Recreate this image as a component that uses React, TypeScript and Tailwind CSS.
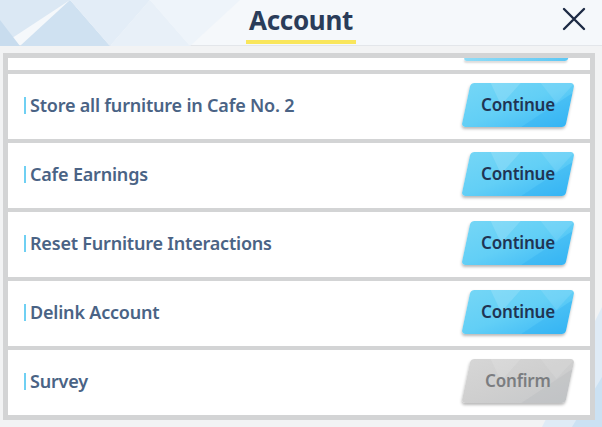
import React from "react";

type Row = { label: string; action: string; disabled?: boolean };

const rows: Row[] = [
  { label: "Store all furniture in Cafe No. 2", action: "Continue" },
  { label: "Cafe Earnings", action: "Continue" },
  { label: "Reset Furniture Interactions", action: "Continue" },
  { label: "Delink Account", action: "Continue" },
  { label: "Survey", action: "Confirm", disabled: true },
];

function ActionButton({ text, disabled }: { text: string; disabled?: boolean }) {
  return (
    <button
      className={
        "relative w-[104px] h-[44px] -skew-x-12 rounded-[4px] overflow-hidden flex items-center justify-center shadow-[0_2px_3px_rgba(0,0,0,0.28)] " +
        (disabled
          ? "bg-gradient-to-br from-[#d6d6d6] via-[#cfcfcf] to-[#c6c8ca]"
          : "bg-gradient-to-br from-[#74d6f6] via-[#62cff6] to-[#38b8f6]")
      }
    >
      <svg className="absolute inset-0 w-full h-full" viewBox="0 0 104 44" preserveAspectRatio="none">
        <polygon points="20,0 50,0 35,22" fill="#ffffff" opacity={disabled ? 0.12 : 0.14} />
        <polygon points="60,44 104,10 104,44" fill={disabled ? "#b8babc" : "#2fb0f0"} opacity={0.35} />
        <polygon points="70,0 104,0 90,20" fill="#ffffff" opacity={0.1} />
      </svg>
      <span
        className={
          "relative skew-x-12 text-[17px] font-semibold tracking-[-0.2px] " +
          (disabled ? "text-[#7b7d80]" : "text-[#1f3453]")
        }
        style={{ fontFamily: '"Noto Sans", "Open Sans", sans-serif' }}
      >
        {text}
      </span>
    </button>
  );
}

function RowItem({ row }: { row: Row }) {
  return (
    <div className="h-[65px] shrink-0 bg-white flex items-center justify-between pl-[16px] pr-[20px] pb-[3px]">
      <div className="flex items-center">
        <div className="w-[2px] h-[17px] bg-[#6fd0f3] mr-[4px]" />
        <span
          className="text-[18px] font-semibold text-[#4a6385] tracking-[-0.2px]"
          style={{ fontFamily: '"Noto Sans", "Open Sans", sans-serif' }}
        >
          {row.label}
        </span>
      </div>
      <ActionButton text={row.action} disabled={row.disabled} />
    </div>
  );
}

export default function App() {
  return (
    <div
      className="relative w-[602px] h-[427px] overflow-hidden bg-[#f2f3f4]"
      style={{ fontFamily: '"Noto Sans", "Open Sans", sans-serif' }}
    >
      {/* background decoration */}
      <svg className="absolute right-0 bottom-0 w-[120px] h-[140px]" viewBox="0 0 120 140">
        <polygon points="120,20 60,140 120,140" fill="#d9e9f6" opacity="0.8" />
        <polygon points="90,140 120,90 120,140" fill="#c6def2" opacity="0.8" />
      </svg>

      {/* header */}
      <div className="relative h-[46px] bg-[#f5f8fb] border-b border-[#e3e6ea] flex items-start justify-center">
        <svg className="absolute left-0 top-0 w-[280px] h-[46px]" viewBox="0 0 280 46" preserveAspectRatio="none">
          <polygon points="0,0 70,0 0,46" fill="#dbe8f4" />
          <polygon points="20,46 70,0 110,46" fill="#cfe1f1" />
          <polygon points="70,0 150,0 110,46" fill="#e3edf7" />
          <polygon points="110,46 150,0 190,46" fill="#e8f0f8" />
          <polygon points="150,0 240,0 190,46" fill="#eef4fa" />
          <polygon points="0,46 20,46 0,20" fill="#c8dcee" />
        </svg>
        <div className="relative flex flex-col items-center">
          <span className="text-[26px] font-bold leading-[36px] mt-[2px] text-[#2a3c59] tracking-[-0.3px]">
            Account
          </span>
          <div className="w-[110px] h-[4px] bg-[#f9e65c] mt-[2px]" />
        </div>
        <button className="absolute right-[16px] top-[7px] w-[24px] h-[24px]">
          <svg viewBox="0 0 24 24" className="w-full h-full">
            <path d="M2 2 L22 22 M22 2 L2 22" stroke="#1d2a44" strokeWidth="2.4" strokeLinecap="round" />
          </svg>
        </button>
      </div>

      {/* panel */}
      <div className="relative px-[3px] pt-[7px]">
        <div className="w-[592px] h-[367px] border-[5px] border-[#d3d4d5] bg-[#d3d4d5] overflow-hidden flex flex-col gap-[4px]">
          {/* partially scrolled-out row: only the bottom of its button shows */}
          <div className="h-[12px] shrink-0 bg-white flex justify-end items-start pr-[22px]">
            <div className="w-[104px] h-[3px] -skew-x-12 rounded-b-[3px] bg-gradient-to-r from-[#8fdcf7] to-[#5cc8f5] shadow-[0_2px_2px_rgba(0,0,0,0.15)]" />
          </div>
          {rows.map((r) => (
            <RowItem key={r.label} row={r} />
          ))}
        </div>
      </div>
    </div>
  );
}
